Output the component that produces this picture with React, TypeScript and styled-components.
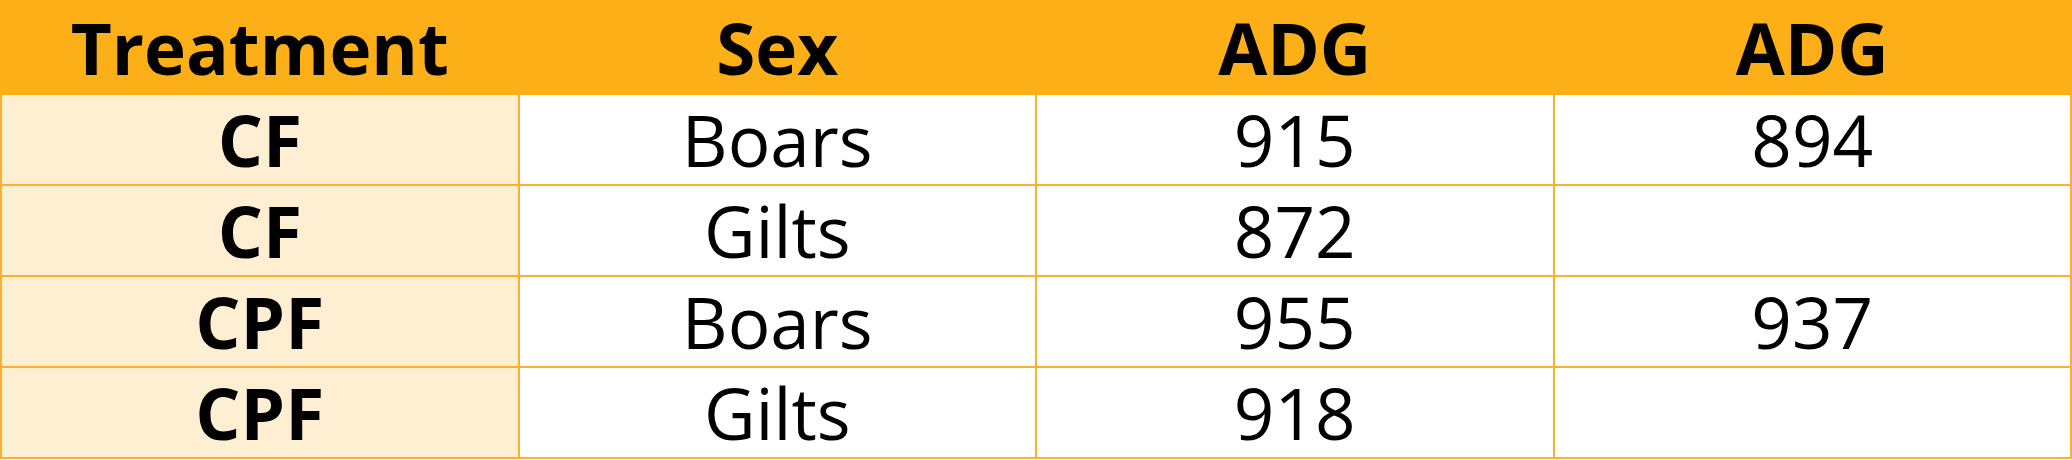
import React from "react";
import styled, { createGlobalStyle } from "styled-components";

interface Row {
  treatment: string;
  sex: string;
  adg: number;
  adgMean?: number;
}

const rows: Row[] = [
  { treatment: "CF", sex: "Boars", adg: 915, adgMean: 894 },
  { treatment: "CF", sex: "Gilts", adg: 872 },
  { treatment: "CPF", sex: "Boars", adg: 955, adgMean: 937 },
  { treatment: "CPF", sex: "Gilts", adg: 918 },
];

const GlobalStyle = createGlobalStyle`
  html, body {
    margin: 0;
    padding: 0;
    background: #ffffff;
  }
  body {
    font-family: "Open Sans", "Noto Sans", sans-serif;
    color: #000;
  }
`;

const Table = styled.table`
  width: 2072px;
  border-collapse: collapse;
  table-layout: fixed;
  font-family: "Open Sans", "Noto Sans", sans-serif;
  font-size: 71px;
  line-height: 1;
`;

const HeadCell = styled.th`
  height: 91px;
  padding: 0;
  background-color: #fcaf17;
  border: 2px solid #fcaf17;
  font-weight: 700;
  text-align: center;
  vertical-align: middle;
`;

const Cell = styled.td<{ $key?: boolean }>`
  height: 89px;
  padding: 0;
  border: 2px solid #fbb02e;
  background-color: ${({ $key }) => ($key ? "#ffefd2" : "#ffffff")};
  font-weight: ${({ $key }) => ($key ? 700 : 400)};
  text-align: center;
  vertical-align: middle;
`;

const App = () => {
  return (
    <>
      <GlobalStyle />
      <Table>
        <thead>
          <tr>
            <HeadCell>Treatment</HeadCell>
            <HeadCell>Sex</HeadCell>
            <HeadCell>ADG</HeadCell>
            <HeadCell>ADG</HeadCell>
          </tr>
        </thead>
        <tbody>
          {rows.map((r, i) => (
            <tr key={i}>
              <Cell $key>{r.treatment}</Cell>
              <Cell>{r.sex}</Cell>
              <Cell>{r.adg}</Cell>
              <Cell>{r.adgMean ?? ""}</Cell>
            </tr>
          ))}
        </tbody>
      </Table>
    </>
  );
};

export default App;
